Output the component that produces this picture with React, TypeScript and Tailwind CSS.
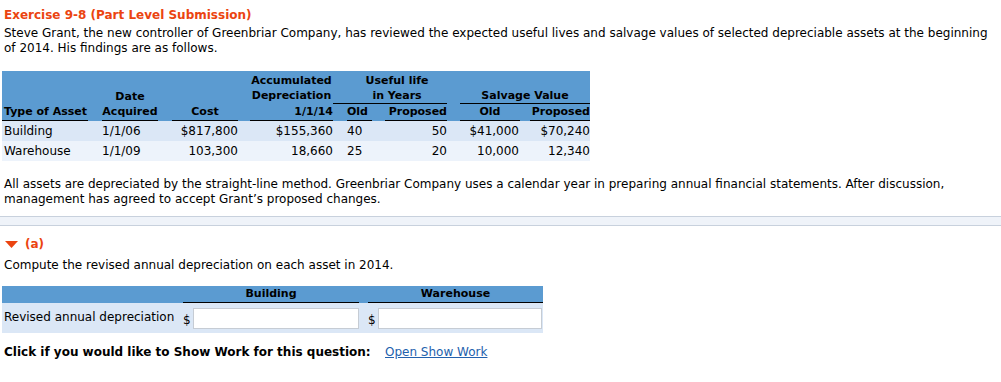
import React from 'react';

// Column layout shared by the header and body rows of the findings table
const cols = 'grid grid-cols-[86px_70px_80px_95px_39px_75px_73px_70px]';

const rows = [
  { type: 'Building', date: '1/1/06', cost: '$817,800', acc: '$155,360', old: '40', prop: '50', sOld: '$41,000', sProp: '$70,240', bg: 'bg-[#dbe7f6]' },
  { type: 'Warehouse', date: '1/1/09', cost: '103,300', acc: '18,660', old: '25', prop: '20', sOld: '10,000', sProp: '12,340', bg: 'bg-[#edf3fb]' },
];

const FindingsTable = () => (
  <div className="w-[588px] mt-[15px]">
    {/* Header */}
    <div className="bg-[#5b9bd1] pt-[2px] font-bold text-[11px] text-black">
      <div className={`${cols} leading-[15px]`}>
        <div />
        <div className="pl-[14px] flex items-end justify-center">Date</div>
        <div />
        <div className="pl-[12px] text-center">Accumulated<br />Depreciation</div>
        <div className="col-span-2 pl-[14px] text-center border-b border-black">Useful life<br />in Years</div>
        <div className="col-span-2 pl-[13px] flex items-end">
          <div className="w-full text-center border-b border-black">Salvage Value</div>
        </div>
      </div>
      <div className={`${cols} leading-[16px]`}>
        <div><div className="border-b border-black whitespace-nowrap pl-[2px]">Type of Asset</div></div>
        <div className="pl-[14px]"><div className="border-b border-black text-center">Acquired</div></div>
        <div className="pl-[14px]"><div className="border-b border-black text-center">Cost</div></div>
        <div className="pl-[12px]"><div className="border-b border-black text-right">1/1/14</div></div>
        <div className="pl-[14px]"><div className="border-b border-black">Old</div></div>
        <div className="pl-[13px]"><div className="border-b border-black text-right">Proposed</div></div>
        <div className="pl-[13px]"><div className="border-b border-black text-center">Old</div></div>
        <div className="pl-[10px]"><div className="border-b border-black text-right">Proposed</div></div>
      </div>
    </div>
    {/* Body */}
    {rows.map((r) => (
      <div key={r.type} className={`${cols} ${r.bg} h-[20px] items-center`}>
        <div className="pl-[2px]">{r.type}</div>
        <div className="pl-[14px]">{r.date}</div>
        <div className="pl-[14px] text-right">{r.cost}</div>
        <div className="pl-[12px] text-right">{r.acc}</div>
        <div className="pl-[14px]">{r.old}</div>
        <div className="pl-[13px] text-right">{r.prop}</div>
        <div className="pl-[13px] text-right pr-[1px]">{r.sOld}</div>
        <div className="pl-[10px] text-right">{r.sProp}</div>
      </div>
    ))}
  </div>
);

const AnswerTable = () => (
  <div className="w-[541px] ml-[2px] mt-[13px]">
    <div className="bg-[#5b9bd1] pt-[1px] font-bold text-[11px] grid grid-cols-[181px_176px_184px] leading-[14px]">
      <div />
      <div><div className="border-b border-black text-center pb-[1px]">Building</div></div>
      <div className="pl-[9px]"><div className="border-b border-black text-center pb-[1px]">Warehouse</div></div>
    </div>
    <div className="bg-[#dbe7f6] h-[30px] grid grid-cols-[181px_176px_184px] items-center">
      <div className="pl-[2px] pb-[2px]">Revised annual depreciation</div>
      <div className="flex items-end">
        <span className="pb-[1px] w-[10px]">$</span>
        <input className="w-[166px] h-[21px] border border-[#c6ccd4] bg-white outline-none" />
      </div>
      <div className="flex items-end pl-[9px]">
        <span className="pb-[1px] w-[10px]">$</span>
        <input className="w-[164px] h-[21px] border border-[#c6ccd4] bg-white outline-none" />
      </div>
    </div>
  </div>
);

export default function App() {
  return (
    <div className="w-[1001px] h-[382px] bg-white text-[12px] leading-[15px] text-black overflow-hidden" style={{ fontFamily: '"DejaVu Sans", Verdana, sans-serif' }}>
      <div className="px-[4px] pt-[7px]">
        <h1 className="font-bold text-[#eb4410] leading-[16px]">Exercise 9-8 (Part Level Submission)</h1>
        <p className="mt-[3px]">
          Steve Grant, the new controller of Greenbriar Company, has reviewed the expected useful lives and salvage values of selected depreciable assets at the beginning of 2014. His findings are as follows.
        </p>
      </div>

      <div className="pl-[2px]">
        <FindingsTable />
      </div>

      <p className="px-[4px] mt-[16px]">
        All assets are depreciated by the straight-line method. Greenbriar Company uses a calendar year in preparing annual financial statements. After discussion, management has agreed to accept Grant’s proposed changes.
      </p>

      <div className="mt-[9px] h-[10px] border-y border-[#c8d1dd] bg-[#eff3f9]" />

      <div className="px-[4px] mt-[11px]">
        <div className="flex items-center gap-[7px] font-bold text-[#eb4410]">
          <svg width="13" height="8" viewBox="0 0 13 8" className="ml-[1px]">
            <polygon points="0,0 13,0 6.5,7" fill="#eb4410" />
          </svg>
          <span>(a)</span>
        </div>
        <p className="mt-[6px]">Compute the revised annual depreciation on each asset in 2014.</p>
      </div>

      <AnswerTable />

      <div className="px-[4px] mt-[12px] flex">
        <span className="font-bold w-[381px]">Click if you would like to Show Work for this question:</span>
        <a href="#" className="text-[#2361ad] underline">Open Show Work</a>
      </div>
    </div>
  );
}
